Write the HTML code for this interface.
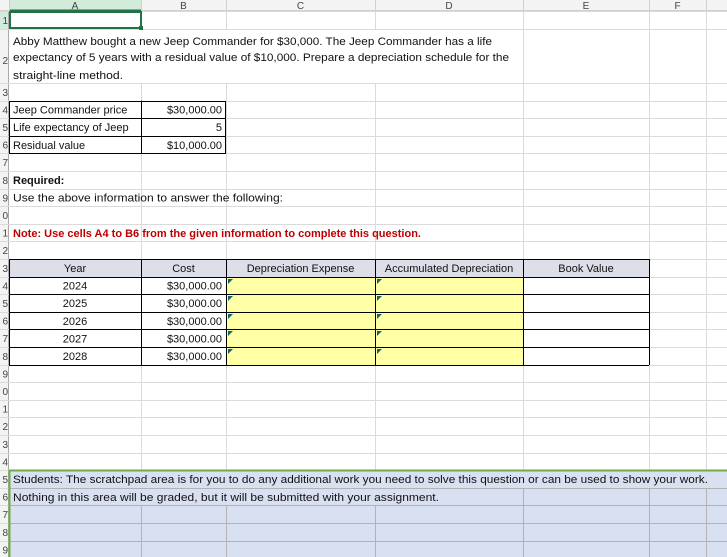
<!DOCTYPE html>
<html><head><meta charset="utf-8">
<style>
html,body{margin:0;padding:0;background:#fff;width:727px;height:557px;overflow:hidden}
svg{display:block}
text{font-family:"Liberation Sans",sans-serif;font-size:11px;fill:#111}
</style></head><body>
<svg id="s" width="727" height="557" xmlns="http://www.w3.org/2000/svg"></svg>
<script>
var s=document.getElementById('s'),h='';
var X=[9,141,226,375,523,649,706,727];
function T(r){if(r==1)return 11;if(r==2)return 29;return 83+(r-3)*17.6;}
function rect(x,y,w,hh,f,st,sw){h+='<rect x="'+x+'" y="'+y+'" width="'+w+'" height="'+hh+'" fill="'+f+'"'+(st?' stroke="'+st+'" stroke-width="'+(sw||1)+'"':'')+'/>';}
function line(x1,y1,x2,y2,c,w){h+='<line x1="'+x1+'" y1="'+y1+'" x2="'+x2+'" y2="'+y2+'" stroke="'+c+'" stroke-width="'+(w||1)+'"/>';}
function txt(x,y,t,o){o=o||{};h+='<text x="'+x+'" y="'+y+'"'+(o.a?' text-anchor="'+o.a+'"':'')+(o.l?' textLength="'+o.l+'" lengthAdjust="spacingAndGlyphs"':'')+(o.s?' style="'+o.s+'"':'')+'>'+t+'</text>';}
// header
rect(0,0,727,11,'#f3f3f3');
rect(9,0,132,11,'#d3ebdb');
line(0,11,727,11,'#ababab');
line(9,10.5,141,10.5,'#217346',2);
var L=['A','B','C','D','E','F'];
for(var i=0;i<7;i++)line(X[i]+.5,0,X[i]+.5,11,'#d0d0d0');
for(var i=0;i<6;i++)txt((X[i]+X[i+1])/2,9,L[i],{a:'middle',s:'fill:#444;font-size:10px'});
// row header column
rect(0,11,9,546,'#f3f3f3');
rect(0,11,9,18,'#d3ebdb');
line(8.5,11,8.5,557,'#ababab');
// grid
for(var r=1;r<=30;r++){var y=Math.round(T(r))+.5;line(0,y,727,y,'#dadada');}
for(var i=1;i<7;i++){var x=X[i]+.5;line(x,11,x,557,'#dadada');}
// white over row2 merged A-D
rect(9,30,514,53,'#fff');
line(523.5,29,523.5,83,'#dadada');
// row numbers
for(var r=1;r<=29;r++){var y0=T(r),y1=T(r+1);var yy=(r==2)?64:(y0+y1)/2+4;txt(8,yy,String(r%10),{a:'end',s:'fill:#444;font-size:10px'});}
// selected A1
rect(10,12,131,16,'none','#217346',2);
rect(139,26,4,4,'#217346');
// row 2 text
txt(13,45,'Abby Matthew bought a new Jeep Commander for $30,000. The Jeep Commander has a life',{l:479});
txt(13,61,'expectancy of 5 years with a residual value of $10,000. Prepare a depreciation schedule for the',{l:496});
txt(13,79,'straight-line method.',{l:110});
// small table
var rows=[['Jeep Commander price','$30,000.00'],['Life expectancy of Jeep','5'],['Residual value','$10,000.00']];
for(var k=0;k<3;k++){var y=T(4+k);txt(13,y+13,rows[k][0]);txt(222,y+13,rows[k][1],{a:'end'});}
rect(9.5,Math.round(T(4))+.5,216,Math.round(T(7))-Math.round(T(4)),'none','#000');
for(var k=5;k<=6;k++)line(9,Math.round(T(k))+.5,226,Math.round(T(k))+.5,'#000');
line(141.5,T(4),141.5,T(7),'#000');
// text rows
txt(13,T(8)+13,'Required:',{s:'font-weight:bold'});
txt(13,T(9)+13,'Use the above information to answer the following:',{l:270});
txt(13,T(11)+13,'Note: Use cells A4 to B6 from the given information to complete this question.',{l:408,s:'font-weight:bold;fill:#c00000'});
// main table
var y13=Math.round(T(13)),y19=Math.round(T(19));
rect(9,y13,640,Math.round(T(14))-y13,'#dcdfe8');
for(var r=14;r<=18;r++){var y=Math.round(T(r));rect(375,y,274-126,Math.round(T(r+1))-y,'#ffffa6');rect(226,y,149,Math.round(T(r+1))-y,'#ffffa6');}
for(var r=13;r<=19;r++)line(9,Math.round(T(r))+.5,649,Math.round(T(r))+.5,'#000');
for(var i=0;i<=5;i++)line(X[i]+.5,y13,X[i]+.5,y19,'#000');
var hd=['Year','Cost','Depreciation Expense','Accumulated Depreciation','Book Value'];
for(var i=0;i<5;i++)txt((X[i]+X[i+1])/2,T(13)+13,hd[i],{a:'middle'});
for(var k=0;k<5;k++){var y=T(14+k);txt(75,y+13,String(2024+k),{a:'middle'});txt(222,y+13,'$30,000.00',{a:'end'});
 var yy=Math.round(y)+2;h+='<polygon points="228,'+yy+' 233,'+yy+' 228,'+(yy+5)+'" fill="#0e6670"/><polygon points="377,'+yy+' 382,'+yy+' 377,'+(yy+5)+'" fill="#0e6670"/>';}
// scratchpad
var y25=Math.round(T(25));
rect(9,y25,718,557-y25,'#d9e0f1');
for(var r=26;r<=29;r++)line(9,Math.round(T(r))+.5,727,Math.round(T(r))+.5,'#b3b3b3');
var y26=Math.round(T(26)),y27=Math.round(T(27));
for(var i=4;i<7;i++)line(X[i]+.5,y26,X[i]+.5,557,'#b3b3b3');
for(var i=1;i<4;i++)line(X[i]+.5,y27,X[i]+.5,557,'#b3b3b3');
line(9,y25+.5,727,y25+.5,'#70ad47',2);
line(9.5,y25,9.5,557,'#70ad47',2);
txt(13,T(25)+13,'Students: The scratchpad area is for you to do any additional work you need to solve this question or can be used to show your work.',{l:695});
txt(13,T(26)+13,'Nothing in this area will be graded, but it will be submitted with your assignment.',{l:426});
s.innerHTML=h;
</script>
</body></html>
